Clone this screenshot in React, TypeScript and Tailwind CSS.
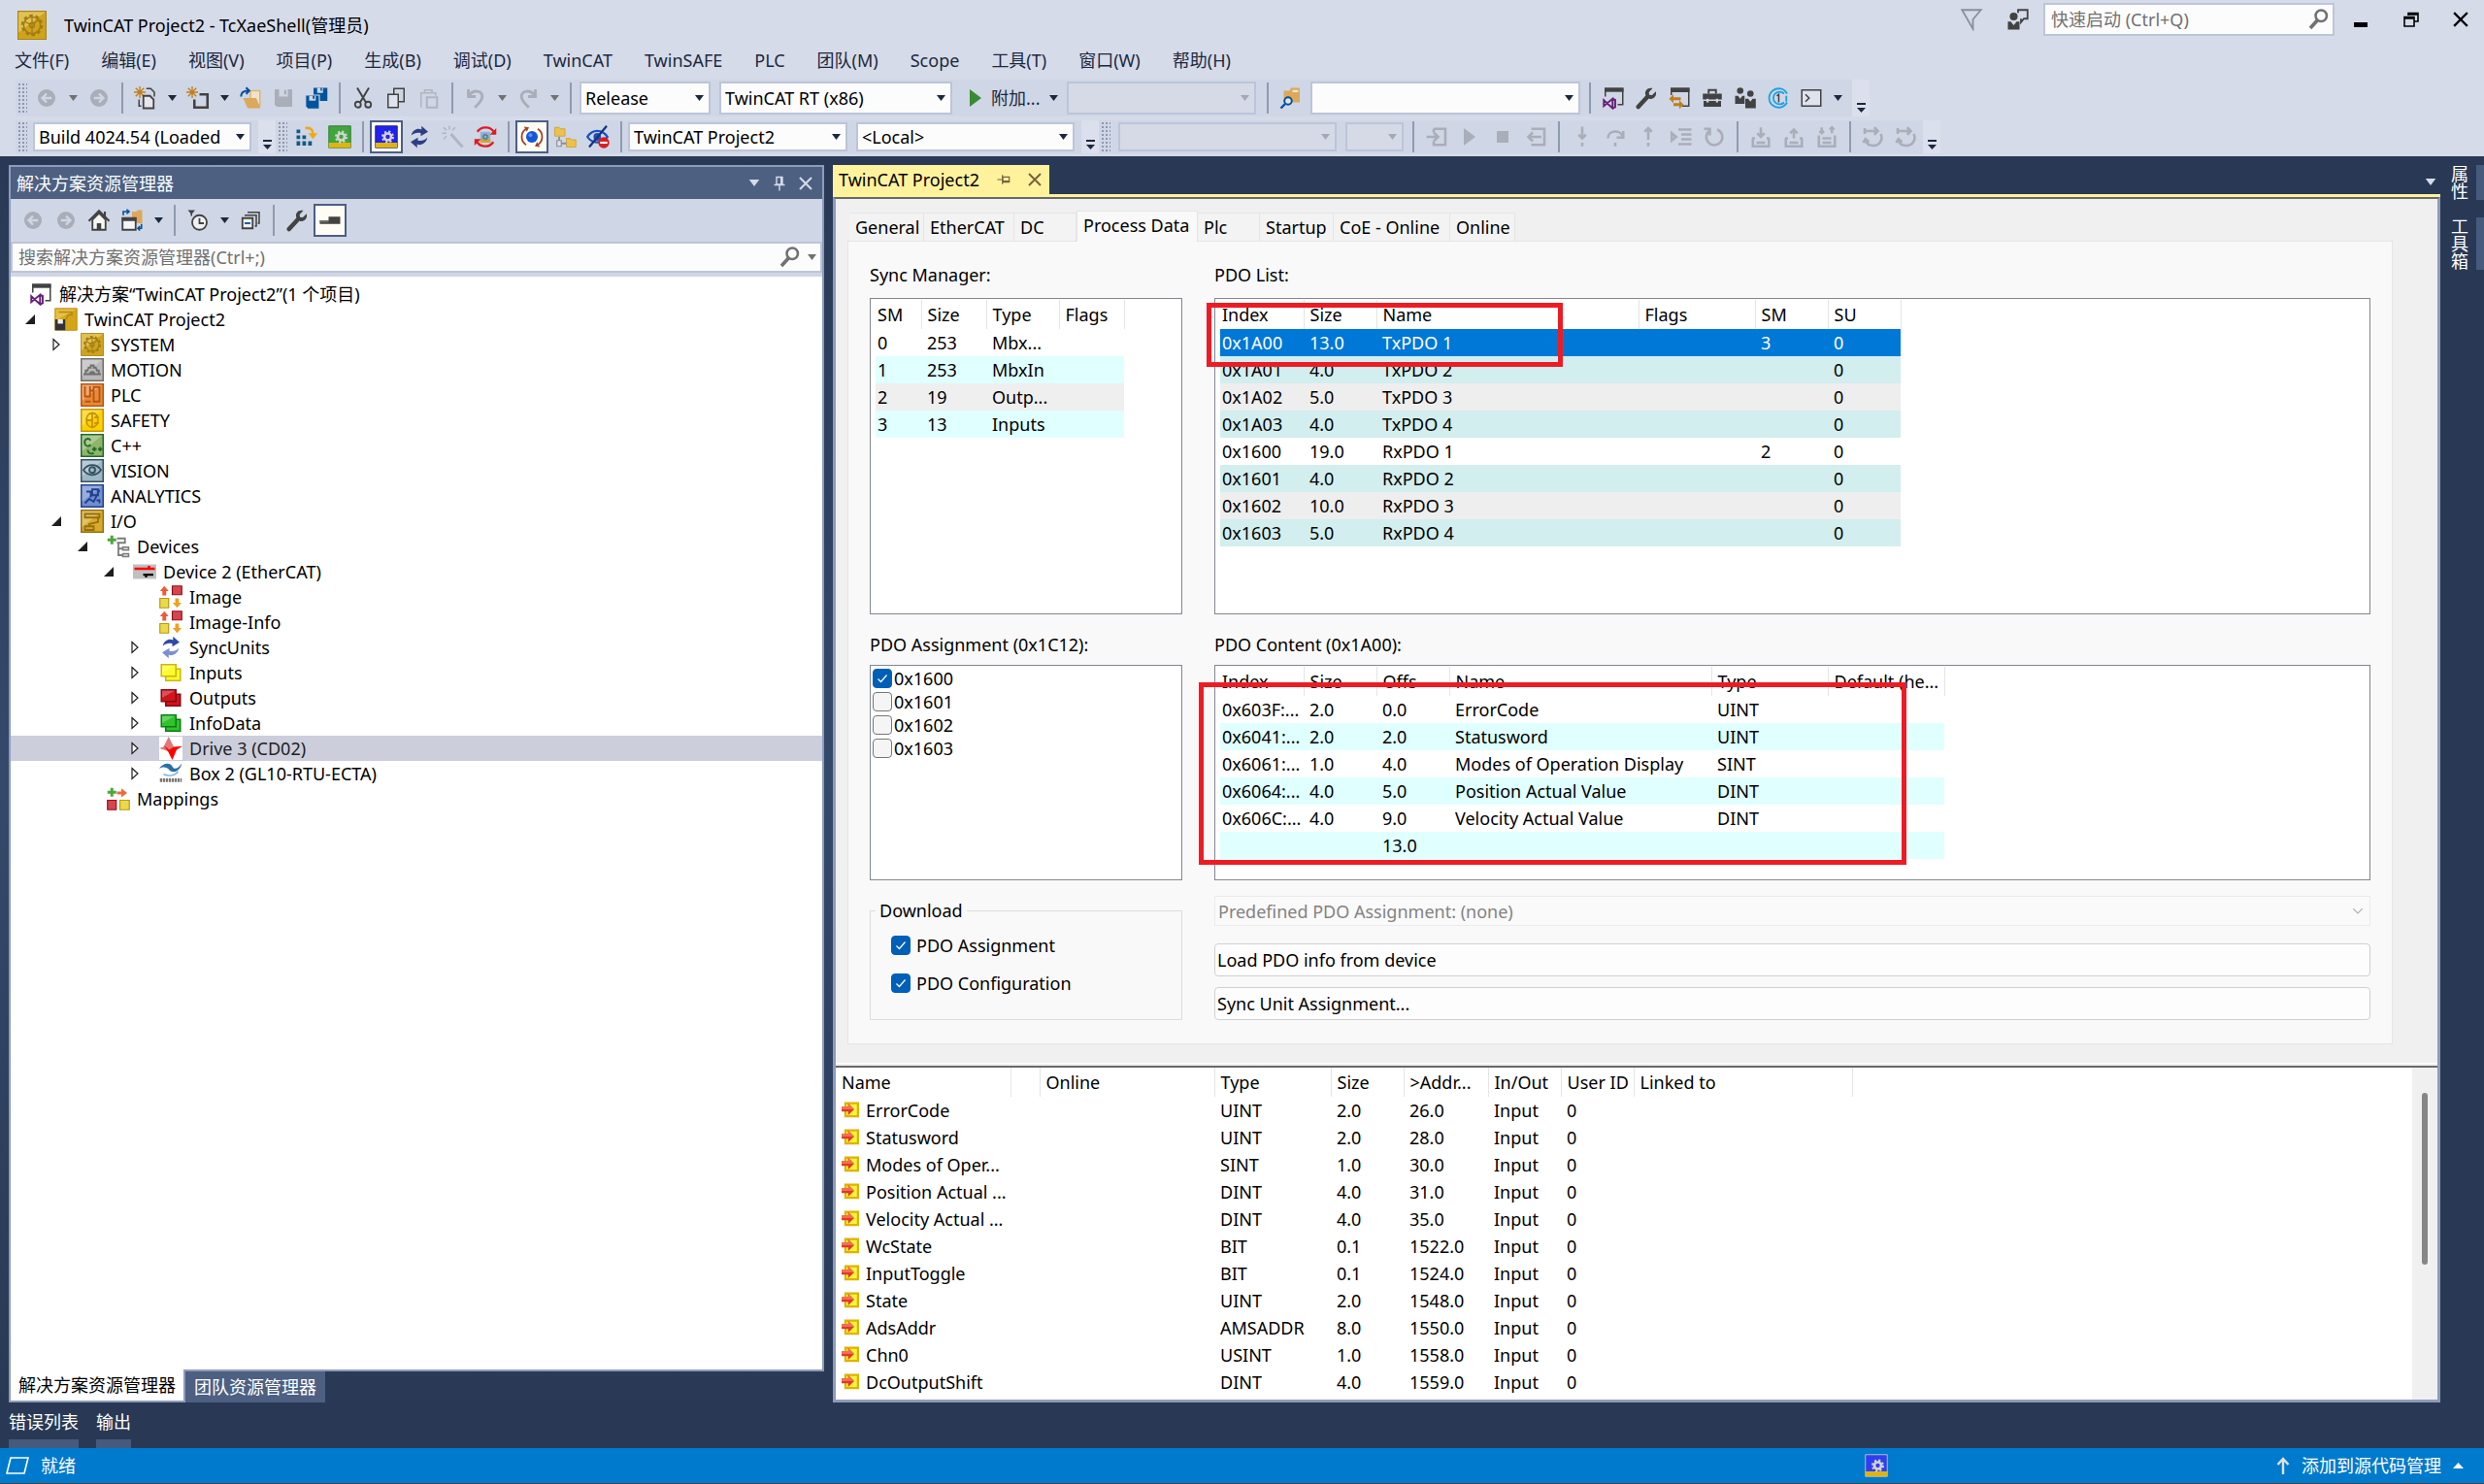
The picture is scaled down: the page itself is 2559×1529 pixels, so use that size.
import type { ReactNode } from 'react';
import clsx from 'clsx';

/* ---------- icon helpers ---------- */

type IconProps = { className?: string };

function Svg({ children, className = 'size-6', box = '0 0 16 16' }: { children: ReactNode; className?: string; box?: string }) {
  return (
    <svg viewBox={box} className={clsx('shrink-0', className)} fill="none" aria-hidden="true">
      {children}
    </svg>
  );
}

const Caret = ({ className = 'text-[#1b293e] w-[9px] h-[6px]' }: IconProps) => (
  <Svg className={className} box="0 0 9 6">
    <path d="M0 0h9L4.500 6z" fill="currentColor" />
  </Svg>
);

function Gear({ color, cx = 8, cy = 8, r = 4 }: { color: string; cx?: number; cy?: number; r?: number }) {
  return (
    <g stroke={color}>
      <circle cx={cx} cy={cy} r={r * 0.65} strokeWidth={r * 0.5} />
      <circle cx={cx} cy={cy} r={r} strokeWidth={r * 0.4} strokeDasharray={`${r * 0.393} ${r * 0.393}`} />
    </g>
  );
}

const CircleArrow = ({ flip }: { flip?: boolean }) => (
  <Svg>
    <circle cx="8" cy="8" r="6" fill="#a9aeb9" />
    <path d={flip ? 'M4.500 8h6M8 5l3 3-3 3' : 'M11.500 8h-6M8 5L5 8l3 3'} stroke="#cfd6e5" strokeWidth="1.600" />
  </Svg>
);

const Spark = () => (
  <path d="M4 0v8M0 4h8M1.200 1.200l5.600 5.600M6.800 1.200L1.200 6.800" stroke="#c27d1a" strokeWidth="0.900" />
);

const NewProject = () => (
  <Svg>
    <Spark />
    <path d="M8.500 1.500h3l2.500 2.500v3" stroke="#424242" />
    <path d="M6.500 6.500h4.500l2.500 2.500v6h-7z" fill="#e6e7ee" stroke="#424242" strokeWidth="1.200" />
    <path d="M3.500 9v4.500h1.500" stroke="#424242" />
  </Svg>
);

const NewItem = () => (
  <Svg>
    <Spark />
    <path d="M9 5.500h5.500v9h-9V9" stroke="#424242" strokeWidth="1.700" />
  </Svg>
);

const OpenFolder = () => (
  <Svg>
    <path d="M8 3h6.500v10H8z" fill="#f0e3c8" stroke="#dcb67a" />
    <path d="M3 8h9l3 7H6z" fill="#dca85a" />
    <path d="M1.500 7c0-3 2-4 5-4M5 .8L7.200 3 5 5.200" stroke="#00539c" strokeWidth="1.400" />
  </Svg>
);

const Save = ({ color = '#a9aeb9' }: { color?: string }) => (
  <Svg>
    <path d="M2 2h12v12H3.500L2 12.500z" fill={color} />
    <path d="M5 2h6v5H5z" fill="#cfd6e5" />
    <path d="M8.500 2.500h1.500v3H8.500z" fill={color} />
  </Svg>
);

const SaveAll = () => (
  <Svg>
    <path d="M6 1h9.500v9H6z" fill="#00539c" />
    <path d="M8.500 1h4v3.500h-4z" fill="#cfd6e5" />
    <path d="M.5 6H10v9.500H2L.5 14z" fill="#00539c" stroke="#cfd6e5" strokeWidth=".8" />
    <path d="M3 6.500h4.500v3.300H3z" fill="#cfd6e5" />
    <path d="M5.500 6.500h1.200v2H5.500zM10.800 1h1v2h-1z" fill="#00539c" />
  </Svg>
);

const Cut = () => (
  <Svg>
    <path d="M4 1l6 10M12 1L6 11" stroke="#424242" strokeWidth="1.300" />
    <circle cx="4.500" cy="12.500" r="2" stroke="#424242" strokeWidth="1.200" />
    <circle cx="11.500" cy="12.500" r="2" stroke="#424242" strokeWidth="1.200" />
  </Svg>
);

const Copy = () => (
  <Svg>
    <path d="M6.500 1.500h7v9h-7z" stroke="#424242" />
    <path d="M2.500 5.500h7v9h-7z" fill="#dfe3ee" stroke="#424242" />
  </Svg>
);

const Paste = () => (
  <Svg>
    <path d="M5 4V2.500h5V4M2.500 14.500V4.500h10v2" stroke="#b0b5c1" />
    <path d="M6.500 7.500h7v7h-7z" stroke="#b0b5c1" strokeWidth="1.400" />
  </Svg>
);

const Undo = ({ flip }: { flip?: boolean }) => (
  <Svg className={clsx('size-6', flip && '-scale-x-100')}>
    <path d="M3 2v5h5M3.500 6.500C6 2 12.500 2.500 12.500 7c0 3-2.500 5-5 7.500" stroke="#a9aeb9" strokeWidth="1.900" />
  </Svg>
);

const FindInFiles = () => (
  <Svg>
    <path d="M3 3h4l1-2h6v10H3z" fill="#dca85a" />
    <path d="M9 2.500h4v1.500H9z" fill="#f5e6c8" />
    <circle cx="6" cy="10" r="2.500" fill="#dfe6f2" stroke="#00539c" strokeWidth="1.300" />
    <path d="M4 12l-3 3" stroke="#00539c" strokeWidth="1.600" />
  </Svg>
);

const VsWindow = () => (
  <Svg>
    <path d="M2.500 7V1.500h12v11H11" stroke="#424242" />
    <path d="M2 1h13v2.800H2z" fill="#424242" />
    <path d="M1.500 9.500v4l6-5v6.500L1.500 9.500zM7.500 8.500l1.800.8v5l-1.800.7" stroke="#68217a" strokeWidth="1.300" />
  </Svg>
);

const Wrench = () => (
  <Svg>
    <path d="M2.500 14L8.500 7.500" stroke="#424242" strokeWidth="3" strokeLinecap="round" />
    <path d="M14.500 3.500L12 6 10 5.800 9.800 4 12.300 1.300C9 .5 6.500 3 7.500 6l2.500 2.500c3 .8 5.500-2 4.500-5z" fill="#424242" />
  </Svg>
);

const WindowArrows = () => (
  <Svg>
    <path d="M2.500 6V1.500h12v12H10" stroke="#424242" />
    <path d="M2 1h13v3H2z" fill="#424242" />
    <path d="M1 8.500l3-3v2h5v2H4v2zM11 12.500l-3 3v-2H4v-2h4v-2z" fill="#c27d1a" />
  </Svg>
);

const Toolbox = () => (
  <Svg>
    <path d="M5.500 5V2.500h5V5" stroke="#424242" strokeWidth="1.300" />
    <path d="M1.500 5h13v4h-13zM2 10h12v4H2z" fill="#424242" />
    <path d="M4 8.500h1.500v2.500H4zM10.500 8.500H12v2.500h-1.500z" fill="#cfd6e5" />
  </Svg>
);

const People = () => (
  <Svg>
    <circle cx="4.500" cy="3" r="2.200" fill="#424242" />
    <circle cx="11.500" cy="5" r="2.200" fill="#424242" />
    <path d="M1 6.500h2l1.500 2L6 6.500h1.500V12H1zM8 8.500h2l1.500 2 1.500-2h2.200V15H8z" fill="#424242" />
  </Svg>
);

const CloudOne = () => (
  <Svg>
    <path d="M14 5A6.500 6.500 0 1 0 14 11" stroke="#1ba1e2" strokeWidth="1.200" />
    <path d="M12 5a4.300 4.300 0 1 0 0 6M13.500 6.500v4" stroke="#1ba1e2" strokeWidth="1.200" />
    <path d="M7 6.500L8.300 5.500V11" stroke="#424242" />
  </Svg>
);

const CommandWindow = () => (
  <Svg>
    <path d="M1.500 2.500h13v11h-13z" fill="#dfe3ee" stroke="#424242" />
    <path d="M4 5.500L6.500 8 4 10.500" stroke="#424242" />
  </Svg>
);

const Bricks = () => (
  <Svg>
    <path d="M1 3h2.500v2.500H1zM1 7h2.500v2.500H1zM5 7h2.500v2.500H5zM1 11h2.500v3H1zM5 11h2.500v3H5zM9 11h2.500v3H9z" fill="#0e5c86" />
    <path d="M7 2c3.500-.5 5.300 1 5.300 4" stroke="#f0a818" strokeWidth="1.700" />
    <path d="M9 5.500h6.500L12.300 9.500z" fill="#f0a818" />
  </Svg>
);

const ModeBox = ({ color, edge }: { color: string; edge: string }) => (
  <Svg>
    <path d="M.5.500h15v15H.5z" fill={color} stroke={edge} strokeWidth=".6" />
    <path d="M.5 12h15v3.500H.5z" fill="#e0b410" />
    <Gear color="#d3d3d3" cx={9} cy={8} r={3.6} />
  </Svg>
);

const SyncArrows = ({ top = '#2c3f85', bottom = '#2c3f85' }: { top?: string; bottom?: string }) => (
  <Svg>
    <path d="M2.500 7C3 3.500 7 1.500 9.500 3V.5L14 4.500 9 7.500V5.500C6.500 4.800 4.500 5.500 2.500 7z" fill={top} />
    <path d="M13.500 8.500C13 12 9 14.500 6.500 13v2.500L2 11.500 7 8.500v2c2.500.7 4.500-.2 6.500-2z" fill={bottom} />
  </Svg>
);

const Wand = () => (
  <Svg>
    <path d="M7 6l8 9" stroke="#b0b5c1" strokeWidth="2" />
    <path d="M6 .5V3M1 5.500h3M2 1.500l2 2M10 1.500l-2 2M2 9.500l2-2" stroke="#b0b5c1" />
  </Svg>
);

const Reload = () => (
  <Svg>
    <path d="M4.500 4.500h7v7h-7z" fill="#8fb6d8" />
    <path d="M4.500 9.500h7v2.500h-7z" fill="#d9a520" />
    <Gear color="#5c7f9c" r={2} />
    <path d="M14.500 6A6.800 6.800 0 0 0 2.500 4.500M1.500 10a6.800 6.800 0 0 0 12 1.500" stroke="#e01b24" strokeWidth="1.500" />
    <path d="M15.500 2v4.500H11zM.5 14V9.500H5z" fill="#e01b24" />
  </Svg>
);

const BlueBall = () => (
  <Svg>
    <circle cx="8" cy="8" r="4" fill="#1158d8" />
    <circle cx="7" cy="6.800" r="1.300" fill="#5b94f0" />
    <path d="M4 2.500C0 5 0 11 4 13.500M12 2.500c4 2.500 4 8.500 0 11" stroke="#a0442c" strokeWidth="1.200" />
    <path d="M2.500 1L6 1.500 4.500 4.500zM13.500 15l-3.500-.5 1.500-3z" fill="#a0442c" />
  </Svg>
);

const FolderTree = () => (
  <Svg>
    <path d="M1 1.500h3l1 1h3v5H1zM9 9h2.500l.8 1H15.500v5H9z" fill="#edc14a" stroke="#c89b2a" strokeWidth=".5" />
    <path d="M4 8v4.500h5M2.500 12.500h3" stroke="#8b8f99" strokeWidth="1.200" />
    <path d="M2.500 10.500h3v4h-3z" fill="#dfe3ee" stroke="#8b8f99" strokeWidth=".8" />
  </Svg>
);

const NoEye = () => (
  <Svg>
    <path d="M.8 8C4 2.500 11 2.500 14.500 8 11 13 4 13 .8 8z" stroke="#1c4fc0" strokeWidth="1.500" />
    <circle cx="7.500" cy="8" r="2.600" fill="#1c4fc0" />
    <path d="M14 .5L2 15" stroke="#16337c" strokeWidth="1.500" />
    <circle cx="12" cy="12" r="3.800" fill="#d81e20" />
    <path d="M9.500 12h5" stroke="#fff" strokeWidth="1.400" />
  </Svg>
);

const grayDraw: Record<string, string> = {
  login: 'M6 2.500h8v11H6V11M6 5V2.500M1 8h8M6 5l3 3-3 3',
  logout: 'M5 2.500h9v11H5M12 8H3M6 5L3 8l3 3',
  stepIn: 'M8 1v8M5.500 6.500L8 9l2.500-2.500M8 12v2.500',
  stepOver: 'M3 9c0-6 9-6 10-1M13.500 4v4.500H9M8 12v2.500',
  stepOut: 'M8 10V2M5.500 4.500L8 2l2.500 2.500M8 12v2.500',
  nextLine: 'M6 3h9M8 6.300h7M8 9.600h7M6 13h9M1.500 5.500L4.500 8l-3 2.500z',
  restart: 'M10 3a5.500 5.500 0 1 1-4.500.3M5 7V2.500H1',
  download: 'M2 9h2M12 9h2M2.500 9v5.500h11V9M5 12h6M8 1.500V8M5.500 5.500L8 8l2.500-2.500',
  upload: 'M2 9h2M12 9h2M2.500 9v5.500h11V9M5 12h6M8 9V3M5.500 5.500L8 3l2.500 2.500',
  exchange: 'M2.500 7v7.500h11V7M5 9h6M5 12h6M4.500 1.500v4M3 4l1.500 1.500L6 4M11.500 5.500v-4M10 3l1.500-1.500L13 3',
  cycle: 'M2 4h9M2 2v4M8.500 1.500L11 4 8.500 6.500M13 6c2 4-1 8-5 8-3 0-5-1.500-5.500-4M1 12l1.500-2.500L5 11.500',
};

const Gray = ({ name }: { name: string }) => (
  <Svg>
    <path d={grayDraw[name]} stroke="#a9aeb9" strokeWidth="1.700" />
  </Svg>
);

const Home = () => (
  <Svg>
    <path d="M1 8.500L8 1.500l7 7M12 2v4" stroke="#424242" strokeWidth="1.400" />
    <path d="M3.500 7.500v7h9v-7L8 3z" fill="#f6f6f6" stroke="#424242" strokeWidth="1.200" />
    <path d="M6.500 10h3v4.500h-3z" fill="#424242" />
  </Svg>
);

const FolderView = () => (
  <Svg>
    <path d="M8 2h3l1-1h3v9H8z" fill="#dca85a" />
    <path d="M1.500 6.500h9v8h-9z" fill="#f6f6f6" stroke="#424242" strokeWidth="1.200" />
    <path d="M1 6h10v2.500H1z" fill="#424242" />
    <path d="M2 4.500V2h3.500M4.300.5L6 2 4.300 3.500M14.500 10.500v3h-2.500M13.500 12L12 13.500l1.500 1.500" stroke="#00539c" strokeWidth="1.100" />
  </Svg>
);

const ClockFilter = () => (
  <Svg>
    <path d="M1 1h5L3.500 4z" fill="#424242" />
    <path d="M3.500 3v2" stroke="#424242" />
    <circle cx="9" cy="9.500" r="5" fill="#f0f1f5" stroke="#424242" strokeWidth="1.200" />
    <path d="M9 6.500v3.500h3" stroke="#424242" strokeWidth="1.200" />
  </Svg>
);

const CollapseAll = () => (
  <Svg>
    <path d="M6.500 3V2.500h7.500v7.500h-1M4.500 5V4.500H12V12h-1" stroke="#424242" />
    <path d="M2.500 6.500h7v7h-7z" fill="#f0f1f5" stroke="#424242" strokeWidth="1.200" />
    <path d="M4 10h4" stroke="#00539c" strokeWidth="1.200" />
  </Svg>
);

const PreviewTab = () => (
  <Svg>
    <path d="M1 8h6V5.500h8v5H1z" fill="#424242" />
    <path d="M1 8h6v1.500H1z" fill="#6b6b6b" />
  </Svg>
);

const Magnifier = () => (
  <Svg>
    <circle cx="9.500" cy="5.500" r="3.800" stroke="#717171" strokeWidth="1.700" />
    <path d="M7 8.500L2 14" stroke="#717171" strokeWidth="2.400" />
  </Svg>
);

const Cross = ({ className = 'size-4' }: IconProps) => (
  <Svg className={className} box="0 0 14 14">
    <path d="M1 1l12 12M13 1L1 13" stroke="currentColor" strokeWidth="2" />
  </Svg>
);

const Pin = ({ className = 'size-4' }: IconProps) => (
  <Svg className={className}>
    <path d="M5 1.500h6V9H5zM2.500 9.500h11M8 10v5.500M9.700 2v7" stroke="currentColor" strokeWidth="1.400" />
  </Svg>
);

const TwinCatLogo = ({ className = 'size-[30px]' }: IconProps) => (
  <Svg className={className}>
    <path d="M.3.300h15.400v15.400H.3z" fill="#cfa41c" stroke="#a8841a" strokeWidth=".6" />
    <path d="M.6.600h14.800L.6 12z" fill="#ecd37a" opacity=".6" />
    <circle cx="8" cy="8" r="4.600" stroke="#a17c14" strokeWidth=".8" />
    <circle cx="8" cy="8" r="5.400" stroke="#a17c14" strokeWidth="1.200" strokeDasharray="1.900 1.500" />
    <circle cx="8" cy="8" r="1.300" stroke="#a17c14" strokeWidth=".8" />
    <path d="M8 3v10M9 7l3-2.500M4 6l3 1.500" stroke="#a17c14" strokeWidth=".7" />
  </Svg>
);

const Tile = ({ from, edge, children }: { from: string; edge: string; children: ReactNode }) => (
  <Svg>
    <path d="M.5.500h15v15H.5z" fill={from} stroke={edge} />
    <path d="M1 1h14L1 12z" fill="#fff" opacity=".28" />
    <g stroke={edge} strokeWidth="1.200">{children}</g>
  </Svg>
);

const Layers = ({ fill, edge }: { fill: string; edge: string }) => (
  <Svg>
    <path d="M4.500 5.500h10v8h-10z" fill={fill} stroke={edge} />
    <path d="M1.500 2.500h10v8h-10z" fill={fill} stroke={edge} />
    <path d="M2 3h9L2 8z" fill="#fff" opacity=".25" />
  </Svg>
);

const ImageIcon = () => (
  <Svg>
    <path d="M3.500.500L6.500 4H4.800v3H2.200V4H.5z" fill="#ee5a38" />
    <path d="M9 .5h6.500v6H9z" fill="#d8444e" stroke="#8f1220" strokeWidth=".8" />
    <path d="M.5 9h6v6.500h-6z" fill="#ecd94a" stroke="#b89a18" strokeWidth=".8" />
    <path d="M12.300 15.500L9.300 12H11V9h2.500v3h1.800z" fill="#f0a020" />
  </Svg>
);

const treeIcons: Record<string, ReactNode> = {
  solution: <VsWindow />,
  project: (
    <Svg>
      <path d="M.5.500h15v15H.5z" fill="#d6a516" stroke="#b88c10" strokeWidth=".6" />
      <path d="M1 1h14L1 9z" fill="#f0d060" opacity=".6" />
      <path d="M3 3h9v2H9.500L8 8" stroke="#b08a18" />
      <path d="M.5 8h7v7.500h-7z" fill="#333" />
      <path d="M2.300 8h3.600v3H2.300z" fill="#eee" />
    </Svg>
  ),
  system: <TwinCatLogo className="size-6" />,
  motion: (
    <Tile from="#b9b9b9" edge="#6f6f6f">
      <path d="M2 11h12M3.500 11V8.500h1.300L5.500 6.500H7V5h2v1.500h1.500l.7 2h1.300V11M6.500 11a1.500 1.500 0 0 1 3 0" />
    </Tile>
  ),
  plc: (
    <Tile from="#e88a3a" edge="#b9540a">
      <path d="M3 2v7h3.500V2M9 2.500h4v10H9zM3 12.500h4M6.500 5H9" />
    </Tile>
  ),
  safety: (
    <Tile from="#fdd000" edge="#c79400">
      <path d="M8 3C3 3 2.500 12.500 8 13M8 3v10M8 3c5 0 5.500 9 0 10M4 8h4M9.500 6h3M9.500 10h3" />
    </Tile>
  ),
  cpp: (
    <Tile from="#8fb56a" edge="#1f6b2a">
      <path d="M7 4.500C5 2 2 4 3 7c.5 1.500 2.500 2 4 .5M5 11c0 3 3 3 4 2M8 10.500h3M9.500 9v3M12 10.500h3M13.500 9v3" />
    </Tile>
  ),
  vision: (
    <Tile from="#9db7c6" edge="#33505f">
      <path d="M2 7.500C5 3 11 3 14 7.500 11 12 5 12 2 7.500z" />
      <circle cx="8" cy="7.500" r="2" />
    </Tile>
  ),
  analytics: (
    <Tile from="#6f8fd0" edge="#223f8f">
      <path d="M3 13l3-3 3 2 4-8M4 5h3v4M8 3.500h4v4H8zM11 11h2v2" />
    </Tile>
  ),
  io: (
    <Tile from="#d9a92c" edge="#94700e">
      <path d="M3 3h10v2.500H3zM3 11.500h6V14H3zM12 6v2.500L6 10v1.500" />
    </Tile>
  ),
  devices: (
    <Svg>
      <path d="M7 2.500h5.500v3H7M8 5.500v8.500h3M8 9.500h3" stroke="#7c7c7c" strokeWidth="1.200" />
      <path d="M11 8.500h4v2h-4zM11 13h4v2h-4z" fill="#ddd" stroke="#7c7c7c" />
      <path d="M3.500.500v6M.5 3.500h6" stroke="#4aa83c" strokeWidth="2" />
    </Svg>
  ),
  device: (
    <Svg>
      <path d="M0 3h16v10H0z" fill="#c0c0c0" />
      <path d="M1 6h14M11 4v2" stroke="#f00" strokeWidth="1.800" />
      <path d="M7 10h7M9 10.500v1.500" stroke="#000" strokeWidth="1.500" />
    </Svg>
  ),
  image: <ImageIcon />,
  sync: <SyncArrows top="#2f4aa8" bottom="#7b8fd8" />,
  inputs: <Layers fill="#fbfb30" edge="#d0b400" />,
  outputs: <Layers fill="#d0141e" edge="#8a0810" />,
  info: <Layers fill="#2fc42c" edge="#0c7d10" />,
  drive: (
    <Svg>
      <path d="M0 0h16v16H0z" fill="#fff" />
      <path d="M0 8l3-1 3.500-7L10 7l2 1-3 3z" fill="#e07878" />
      <path d="M3 6l4 3 3-2 6-.5L12 9l-3 7-3-6z" fill="#f00" />
    </Svg>
  ),
  box: (
    <Svg>
      <path d="M0 4.500C3 0 8 .5 9 3c1 2.500 4 2 6.500-2-1 6-7 7.500-9 4C5 3.500 3 3 0 4.500z" fill="#2a6fa5" />
      <path d="M3 8.500c4 1.500 8 1 10-2" stroke="#7bb0d6" />
      <path d="M.5 12.500h15" stroke="#777" strokeWidth="2.500" strokeDasharray="1.500 .5" />
    </Svg>
  ),
  mappings: (
    <Svg>
      <path d="M3.500.500v6M.5 3.500h6" stroke="#4aa83c" strokeWidth="2" />
      <path d="M7 3h3V.8L14 4l-4 3V5H7z" fill="#ee6a38" />
      <path d="M.5 9h6v6.500h-6z" fill="#d8444e" stroke="#8f1220" strokeWidth=".8" />
      <path d="M9 9h6.500v6.500H9z" fill="#ecd94a" stroke="#b89a18" strokeWidth=".8" />
    </Svg>
  ),
};

const VarIcon = () => (
  <Svg className="size-[18px]">
    <path d="M3.500 1.500h11.500v12H3.500z" fill="#fbf33a" stroke="#dcb400" strokeWidth="2" />
    <path d="M0 4.500h6V1.500L11.500 7 6 12.500V9H0z" fill="#e2382a" />
    <path d="M0 4.500h6V1.500L11.500 7H0z" fill="#f07050" />
  </Svg>
);

/* ---------- toolbar parts ---------- */

const Grip = () => (
  <span className="mx-[3px] h-[30px] w-[9px] shrink-0 bg-[radial-gradient(circle_at_1px_1px,#8d97ad_1px,transparent_1.5px)] bg-[length:4px_4px]" />
);
const Sep = () => <span className="mx-1.5 h-8 w-0.5 shrink-0 bg-[#8f9bb0]" />;

function Tool({ label, on, children }: { label: string; on?: boolean; children: ReactNode }) {
  return (
    <button
      type="button"
      aria-label={label}
      className={clsx('flex h-[34px] w-[34px] shrink-0 items-center justify-center', on && 'border-2 border-[#4b5f85] bg-[#fffcf4]')}
    >
      {children}
    </button>
  );
}

const Drop = ({ off }: { off?: boolean }) => (
  <button type="button" aria-label="更多" className="flex h-8 w-5 shrink-0 items-center justify-center">
    <Caret className={off ? 'h-1.5 w-[9px] text-[#717171]' : 'h-1.5 w-[9px] text-[#1b293e]'} />
  </button>
);

function Combo({ label, value, width, height = 'h-[34px]', off }: { label: string; value?: string; width: string; height?: string; off?: boolean }) {
  return (
    <label className={clsx('relative flex shrink-0 items-center', width, height)}>
      <select
        aria-label={label}
        disabled={off}
        className={clsx(
          'h-full w-full appearance-none border-2 px-1 text-black',
          off ? 'border-[#bcc5d9] bg-[#d5dae6]' : 'border-[#bcc5d9] bg-[#fcfcfc]',
        )}
      >
        <option>{value}</option>
      </select>
      <span className="pointer-events-none absolute right-[7px]">
        <Caret className={off ? 'h-1.5 w-[9px] text-[#a2a9b8]' : 'h-1.5 w-[9px] text-[#1b293e]'} />
      </span>
    </label>
  );
}

const Overflow = () => (
  <button type="button" aria-label="工具栏选项" className="flex w-[18px] shrink-0 items-end justify-center self-stretch bg-[#dce0ec] pb-1">
    <Svg className="h-2.5 w-[9px]" box="0 0 9 10">
      <path d="M0 1h9" stroke="#1b293e" strokeWidth="2" />
      <path d="M0 5h9L4.500 10z" fill="#1b293e" />
    </Svg>
  </button>
);

const Band = ({ children, className }: { children: ReactNode; className?: string }) => (
  <div className={clsx('flex items-center bg-[#cfd6e5]', className)}>{children}</div>
);

const menus = ['文件(F)', '编辑(E)', '视图(V)', '项目(P)', '生成(B)', '调试(D)', 'TwinCAT', 'TwinSAFE', 'PLC', '团队(M)', 'Scope', '工具(T)', '窗口(W)', '帮助(H)'];

function Header() {
  return (
    <header className="bg-[#d6dbe9] pb-[3px] text-[#1b293e]">
      <div className="flex h-[45px]">
        <div className="flex flex-1 items-center gap-[18px] pl-[18px] pt-1.5">
          <TwinCatLogo />
          <h1 className="text-black">TwinCAT Project2 - TcXaeShell(管理员)</h1>
        </div>
        <div className="flex items-start pr-4 pt-[3px] text-black">
          <div className="flex h-[34px] items-center gap-6 pr-3.5">
            <Svg>
              <path d="M1.500 1.500h13L9 8v6.500L1.500 1.500z" stroke="#8a8f9b" strokeWidth="1.200" />
            </Svg>
            <Svg>
              <circle cx="5" cy="6" r="2.700" fill="#424242" />
              <path d="M1 9.500h2L5 12l2-2.500h2V15H1z" fill="#424242" />
              <path d="M8 3.500v-2h6.500v6H12L10 10V7.500" stroke="#424242" strokeWidth="1.200" />
            </Svg>
          </div>
          <div className="flex h-[34px] w-[300px] items-center border-2 border-[#bcc5d9] bg-[#fcfcfc] pr-0.5">
            <input aria-label="快速启动" placeholder="快速启动 (Ctrl+Q)" className="min-w-0 flex-1 px-1.5 placeholder:text-[#717171]" />
            <Magnifier />
          </div>
          <div className="flex h-[34px] items-center gap-[35px] pl-[18px]">
            <button type="button" aria-label="最小化" className="flex h-4 w-[18px] items-end justify-center">
              <span className="h-[5px] w-3.5 bg-black" />
            </button>
            <button type="button" aria-label="还原">
              <Svg className="size-4">
                <path d="M5 4V1.500h10V10h-3.500M1 5.500h10V15H1z" stroke="#000" strokeWidth="1.600" />
                <path d="M1 6.500h10M5 2.500h10" stroke="#000" strokeWidth="2.400" />
              </Svg>
            </button>
            <button type="button" aria-label="关闭">
              <Cross />
            </button>
          </div>
        </div>
      </div>
      <nav className="-ml-px flex h-[37px] items-center gap-px pb-[3px]">
        {menus.map((m) => (
          <button key={m} type="button" className="px-4">
            {m}
          </button>
        ))}
      </nav>
      <div className="flex pl-4">
        <Band className="h-[38px]">
          <Grip />
          <Tool label="后退"><CircleArrow /></Tool>
          <Drop off />
          <Tool label="前进"><CircleArrow flip /></Tool>
          <Sep />
          <Tool label="新建项目"><NewProject /></Tool>
          <Drop />
          <Tool label="新建项"><NewItem /></Tool>
          <Drop />
          <Tool label="打开"><OpenFolder /></Tool>
          <Tool label="保存"><Save /></Tool>
          <Tool label="全部保存"><SaveAll /></Tool>
          <Sep />
          <Tool label="剪切"><Cut /></Tool>
          <Tool label="复制"><Copy /></Tool>
          <Tool label="粘贴"><Paste /></Tool>
          <Sep />
          <Tool label="撤消"><Undo /></Tool>
          <Drop off />
          <Tool label="重做"><Undo flip /></Tool>
          <Drop off />
          <Sep />
          <span className="w-0.5" />
          <Combo label="解决方案配置" value="Release" width="w-[135px]" />
          <span className="w-[9px]" />
          <Combo label="解决方案平台" value="TwinCAT RT (x86)" width="w-[240px]" />
          <button type="button" className="flex h-8 w-[118px] items-center gap-2.5 pl-[18px]">
            <Svg className="h-[18px] w-3" box="0 0 12 18">
              <path d="M0 0l12 9L0 18z" fill="#388a34" />
            </Svg>
            附加...
            <Caret />
          </button>
          <Combo label="调试目标" width="w-[195px]" off />
          <span className="w-[5px]" />
          <Sep />
          <Tool label="在文件中查找"><FindInFiles /></Tool>
          <span className="w-[3px]" />
          <Combo label="查找" width="w-[278px]" />
          <span className="w-[3px]" />
          <Sep />
          <Tool label="解决方案资源管理器"><VsWindow /></Tool>
          <Tool label="属性"><Wrench /></Tool>
          <Tool label="对象浏览器"><WindowArrows /></Tool>
          <Tool label="工具箱"><Toolbox /></Tool>
          <Tool label="团队"><People /></Tool>
          <Tool label="起始页"><CloudOne /></Tool>
          <Tool label="命令窗口"><CommandWindow /></Tool>
          <Drop />
          <span className="w-[5px]" />
        </Band>
        <Overflow />
      </div>
      <div className="flex pl-4 pt-1">
        <Band className="h-[34px]">
          <Grip />
          <span className="w-[3px]" />
          <Combo label="TwinCAT 版本" value="Build 4024.54 (Loaded" width="w-[225px]" height="h-[30px]" />
          <span className="w-[7px]" />
        </Band>
        <Overflow />
        <Band>
          <Grip />
          <Tool label="激活配置"><Bricks /></Tool>
          <Tool label="运行模式"><ModeBox color="#3fa53c" edge="#2f7a2c" /></Tool>
          <Sep />
          <Tool label="配置模式" on><ModeBox color="#2222ee" edge="#1a1a9a" /></Tool>
          <Tool label="重新加载设备"><SyncArrows /></Tool>
          <Tool label="扫描"><Wand /></Tool>
          <Tool label="自由运行"><Reload /></Tool>
          <Sep />
          <Tool label="显示在线数据" on><BlueBall /></Tool>
          <Tool label="显示子项"><FolderTree /></Tool>
          <Tool label="隐藏禁用项"><NoEye /></Tool>
          <Sep />
          <Combo label="活动项目" value="TwinCAT Project2" width="w-[226px]" height="h-[30px]" />
          <span className="w-[9px]" />
          <Combo label="目标系统" value="<Local>" width="w-[225px]" height="h-[30px]" />
          <span className="w-[7px]" />
        </Band>
        <Overflow />
        <Band>
          <Grip />
          <span className="w-[5px]" />
          <Combo label="PLC 项目" width="w-[225px]" height="h-[30px]" off />
          <span className="w-[9px]" />
          <Combo label="端口" width="w-[60px]" height="h-[30px]" off />
          <span className="w-[3px]" />
          <Sep />
          <Tool label="登录"><Gray name="login" /></Tool>
          <Tool label="启动">
            <Svg><path d="M4 2l8 6-8 6z" fill="#a9aeb9" /></Svg>
          </Tool>
          <Tool label="停止">
            <Svg><path d="M4 4h8v8H4z" fill="#a9aeb9" /></Svg>
          </Tool>
          <Tool label="注销"><Gray name="logout" /></Tool>
          <Sep />
          <Tool label="单步进入"><Gray name="stepIn" /></Tool>
          <Tool label="单步跳过"><Gray name="stepOver" /></Tool>
          <Tool label="单步跳出"><Gray name="stepOut" /></Tool>
          <Tool label="显示下一语句"><Gray name="nextLine" /></Tool>
          <Tool label="重置"><Gray name="restart" /></Tool>
          <Sep />
          <Tool label="下载"><Gray name="download" /></Tool>
          <Tool label="上传"><Gray name="upload" /></Tool>
          <Tool label="交换"><Gray name="exchange" /></Tool>
          <Sep />
          <Tool label="循环写"><Gray name="cycle" /></Tool>
          <Tool label="循环强制"><Gray name="cycle" /></Tool>
        </Band>
        <Overflow />
      </div>
    </header>
  );
}

/* ---------- solution explorer ---------- */

type Node = { label: string; icon: string; level: number; open?: boolean; closed?: boolean; selected?: boolean };

const tree: Node[] = [
  { label: '解决方案“TwinCAT Project2”(1 个项目)', icon: 'solution', level: 0 },
  { label: 'TwinCAT Project2', icon: 'project', level: 1, open: true },
  { label: 'SYSTEM', icon: 'system', level: 2, closed: true },
  { label: 'MOTION', icon: 'motion', level: 2 },
  { label: 'PLC', icon: 'plc', level: 2 },
  { label: 'SAFETY', icon: 'safety', level: 2 },
  { label: 'C++', icon: 'cpp', level: 2 },
  { label: 'VISION', icon: 'vision', level: 2 },
  { label: 'ANALYTICS', icon: 'analytics', level: 2 },
  { label: 'I/O', icon: 'io', level: 2, open: true },
  { label: 'Devices', icon: 'devices', level: 3, open: true },
  { label: 'Device 2 (EtherCAT)', icon: 'device', level: 4, open: true },
  { label: 'Image', icon: 'image', level: 5 },
  { label: 'Image-Info', icon: 'image', level: 5 },
  { label: 'SyncUnits', icon: 'sync', level: 5, closed: true },
  { label: 'Inputs', icon: 'inputs', level: 5, closed: true },
  { label: 'Outputs', icon: 'outputs', level: 5, closed: true },
  { label: 'InfoData', icon: 'info', level: 5, closed: true },
  { label: 'Drive 3 (CD02)', icon: 'drive', level: 5, closed: true, selected: true },
  { label: 'Box 2 (GL10-RTU-ECTA)', icon: 'box', level: 5, closed: true },
  { label: 'Mappings', icon: 'mappings', level: 3 },
];

const indents = ['pl-1', 'pl-[30px]', 'pl-[57px]', 'pl-[84px]', 'pl-[111px]', 'pl-[138px]'];

function TreeRow({ node }: { node: Node }) {
  const toggle = node.open || node.closed;
  return (
    <li className={clsx('flex h-[26px] items-center', indents[node.level], node.selected && 'bg-[#cccedb] text-[#222]')}>
      {toggle ? (
        <button type="button" aria-label={node.label} className="-ml-[18px] mr-[18px] flex h-5 w-[15px] shrink-0 items-center justify-center">
          {node.open ? (
            <Svg className="size-2.5" box="0 0 10 10">
              <path d="M10 0v10H0z" fill="#1e1e1e" />
            </Svg>
          ) : (
            <Svg className="h-3.5 w-2" box="0 0 8 14">
              <path d="M1 1.500L7 7l-6 5.500z" fill="#fff" stroke="#1e1e1e" strokeWidth="1.200" />
            </Svg>
          )}
        </button>
      ) : (
        <span className="w-[15px] shrink-0" />
      )}
      {treeIcons[node.icon]}
      <span className="pl-[7px] whitespace-nowrap">{node.label}</span>
    </li>
  );
}

function SolutionExplorer() {
  return (
    <aside className="flex w-[858px] shrink-0 flex-col bg-[linear-gradient(to_bottom,#293955,#35496a,#293955)] pl-[9px] pr-[9px] pt-[9px]">
      <section className="flex flex-1 flex-col border-2 border-[#8e9bbc] bg-white">
        <div className="flex h-[33px] items-center gap-3 bg-[#4d6082] pl-1.5 pr-2.5 text-white">
          <h2 className="flex-1">解决方案资源管理器</h2>
          <Caret className="h-[7px] w-3 text-[#d6dbe9]" />
          <Pin className="size-4 text-[#d6dbe9]" />
          <Cross className="size-3.5 text-[#d6dbe9]" />
        </div>
        <div className="flex h-11 items-center bg-[#cfd6e5] pl-1.5">
          <Tool label="后退"><CircleArrow /></Tool>
          <Tool label="前进"><CircleArrow flip /></Tool>
          <Tool label="主页"><Home /></Tool>
          <Tool label="切换视图"><FolderView /></Tool>
          <Drop />
          <Sep />
          <Tool label="挂起的更改筛选器"><ClockFilter /></Tool>
          <Drop />
          <Tool label="全部折叠"><CollapseAll /></Tool>
          <Sep />
          <Tool label="属性"><Wrench /></Tool>
          <Tool label="预览选定项" on><PreviewTab /></Tool>
        </div>
        <div className="bg-[#cfd6e5] pb-1">
          <div className="flex h-8 items-center gap-1.5 border-2 border-[#bcc5d9] bg-[#fcfcfc] pr-1">
            <input
              aria-label="搜索解决方案资源管理器"
              placeholder="搜索解决方案资源管理器(Ctrl+;)"
              className="min-w-0 flex-1 px-1.5 placeholder:text-[#717171]"
            />
            <Magnifier />
            <Caret className="h-1.5 w-[9px] text-[#717171]" />
          </div>
        </div>
        <ul className="pt-[5px] text-black">
          {tree.map((n, i) => (
            <TreeRow key={i} node={n} />
          ))}
        </ul>
      </section>
      <div className="flex h-8">
        <button type="button" className="-mt-0.5 border-2 border-t-0 border-[#8e9bbc] bg-white px-2 text-black">
          解决方案资源管理器
        </button>
        <button type="button" className="bg-[#4d6082] px-[9px] text-white">
          团队资源管理器
        </button>
      </div>
    </aside>
  );
}

/* ---------- process data page ---------- */

type Col = { name: string; w: string };
type GridProps = { label: string; cols: Col[]; rows: ReactNode[][]; rowClass?: (i: number) => string; wide?: boolean };

function Grid({ label, cols, rows, rowClass, wide }: GridProps) {
  const inset = wide ? 'first:pl-1.5' : 'first:pl-0.5';
  return (
    <table aria-label={label} className="w-max table-fixed border-collapse text-left">
      <colgroup>
        {cols.map((c, i) => (
          <col key={i} className={c.w} />
        ))}
      </colgroup>
      <thead>
        <tr className="h-[30px]">
          {cols.map((c, i) => (
            <th key={i} className={clsx('border-r border-[#e5e5e5] p-0 pl-1.5 font-normal whitespace-nowrap', inset)}>
              {c.name}
            </th>
          ))}
        </tr>
      </thead>
      <tbody>
        {rows.map((r, i) => (
          <tr key={i} className={clsx('h-7', rowClass?.(i))}>
            {cols.map((_, j) => (
              <td key={j} className={clsx('p-0 pl-1.5 whitespace-nowrap', inset)}>
                {r[j]}
              </td>
            ))}
          </tr>
        ))}
      </tbody>
    </table>
  );
}

const syncCols: Col[] = [
  { name: 'SM', w: 'w-[47px]' },
  { name: 'Size', w: 'w-[67px]' },
  { name: 'Type', w: 'w-[75px]' },
  { name: 'Flags', w: 'w-[67px]' },
];
const syncRows = [
  ['0', '253', 'Mbx...'],
  ['1', '253', 'MbxIn'],
  ['2', '19', 'Outp...'],
  ['3', '13', 'Inputs'],
];
const syncTone = ['', 'bg-[#e0ffff]', 'bg-[#efefef]', 'bg-[#e0ffff]'];

const pdoCols: Col[] = [
  { name: 'Index', w: 'w-[86px]' },
  { name: 'Size', w: 'w-[75px]' },
  { name: 'Name', w: 'w-[270px]' },
  { name: 'Flags', w: 'w-[120px]' },
  { name: 'SM', w: 'w-[75px]' },
  { name: 'SU', w: 'w-[75px]' },
];
const pdoRows = [
  ['0x1A00', '13.0', 'TxPDO 1', '', '3', '0'],
  ['0x1A01', '4.0', 'TxPDO 2', '', '', '0'],
  ['0x1A02', '5.0', 'TxPDO 3', '', '', '0'],
  ['0x1A03', '4.0', 'TxPDO 4', '', '', '0'],
  ['0x1600', '19.0', 'RxPDO 1', '', '2', '0'],
  ['0x1601', '4.0', 'RxPDO 2', '', '', '0'],
  ['0x1602', '10.0', 'RxPDO 3', '', '', '0'],
  ['0x1603', '5.0', 'RxPDO 4', '', '', '0'],
];
const pdoTone = ['bg-[#0078d7] text-white', 'bg-[#d3eeee]', 'bg-[#eeeeee]', 'bg-[#d3eeee]', '', 'bg-[#d3eeee]', 'bg-[#eeeeee]', 'bg-[#d3eeee]'];

const contentCols: Col[] = [
  { name: 'Index', w: 'w-[86px]' },
  { name: 'Size', w: 'w-[75px]' },
  { name: 'Offs', w: 'w-[75px]' },
  { name: 'Name', w: 'w-[270px]' },
  { name: 'Type', w: 'w-[120px]' },
  { name: 'Default (he...', w: 'w-[120px]' },
];
const contentRows = [
  ['0x603F:...', '2.0', '0.0', 'ErrorCode', 'UINT'],
  ['0x6041:...', '2.0', '2.0', 'Statusword', 'UINT'],
  ['0x6061:...', '1.0', '4.0', 'Modes of Operation Display', 'SINT'],
  ['0x6064:...', '4.0', '5.0', 'Position Actual Value', 'DINT'],
  ['0x606C:...', '4.0', '9.0', 'Velocity Actual Value', 'DINT'],
  ['', '', '13.0'],
];

const tabs = [
  { name: 'General', w: 'w-[77px]' },
  { name: 'EtherCAT', w: 'w-[93px]' },
  { name: 'DC', w: 'w-16' },
  { name: 'Process Data', w: 'w-[125px]' },
  { name: 'Plc', w: 'w-16' },
  { name: 'Startup', w: 'w-[76px]' },
  { name: 'CoE - Online', w: 'w-[120px]' },
  { name: 'Online', w: 'w-[67px]' },
];

function Check({ id, label, checked, className }: { id: string; label: string; checked?: boolean; className?: string }) {
  return (
    <label htmlFor={id} className={clsx('flex items-center', className)}>
      <span className="relative flex size-5 shrink-0">
        <input
          id={id}
          type="checkbox"
          defaultChecked={checked}
          className="peer size-5 appearance-none rounded-[4px] border border-[#767676] bg-[#f5f5f5] checked:border-[#005fb8] checked:bg-[#005fb8]"
        />
        <svg viewBox="0 0 20 20" className="pointer-events-none absolute inset-0 hidden peer-checked:block" fill="none">
          <path d="M5.500 10.500l3 3 6-7" stroke="#fff" strokeWidth="1.200" />
        </svg>
      </span>
      {label}
    </label>
  );
}

function ProcessData() {
  return (
    <div className="bg-[#f0f0f0] pb-[19px] pl-3 pr-[46px] pt-3">
      <div role="tablist" className="flex items-end pl-0.5">
        {tabs.map((t) => {
          const active = t.name === 'Process Data';
          return (
            <button
              key={t.name}
              type="button"
              role="tab"
              aria-selected={active}
              className={clsx(
                'border border-b-0 border-[#e5e5e5] pl-1.5 text-left whitespace-nowrap',
                t.w,
                active ? 'relative -mb-px h-8 bg-[#f9f9f9] pb-1' : 'h-[29px] border-l-0 bg-[#f3f3f3]',
              )}
            >
              {t.name}
            </button>
          );
        })}
      </div>
      <div className="grid grid-cols-[322px_minmax(0,1fr)] gap-x-[33px] border border-[#e5e5e5] bg-[#f9f9f9] px-[22px] pb-6 pt-5">
        <section>
          <h3 className="mb-2.5 leading-7">Sync Manager:</h3>
          <div className="h-[326px] border border-[#828790] bg-white pl-[5px] pt-px">
            <Grid label="Sync Manager" cols={syncCols} rows={syncRows} rowClass={(i) => syncTone[i]} />
          </div>
        </section>
        <section>
          <h3 className="mb-2.5 leading-7">PDO List:</h3>
          <div className="relative h-[326px] border border-[#828790] bg-white pl-[5px] pt-px">
            <Grid label="PDO List" cols={pdoCols} rows={pdoRows} rowClass={(i) => pdoTone[i]} />
            <span className="absolute -left-[9px] top-1 h-[66px] w-[367px] border-5 border-[#ed1c24]" />
          </div>
        </section>
        <section className="pt-[18px]">
          <h3 className="mb-2 leading-[26px]">PDO Assignment (0x1C12):</h3>
          <div className="h-[222px] border border-[#828790] bg-white pl-0.5 pt-px">
            <Check id="a1600" label="0x1600" checked className="h-6 gap-0.5" />
            <Check id="a1601" label="0x1601" className="h-6 gap-0.5" />
            <Check id="a1602" label="0x1602" className="h-6 gap-0.5" />
            <Check id="a1603" label="0x1603" className="h-6 gap-0.5" />
          </div>
        </section>
        <section className="pt-[18px]">
          <h3 className="mb-2 leading-[26px]">PDO Content (0x1A00):</h3>
          <div className="relative h-[222px] border border-[#828790] bg-white pl-[5px] pt-px">
            <Grid label="PDO Content" cols={contentCols} rows={contentRows} rowClass={(i) => (i % 2 ? 'bg-[#e0ffff]' : '')} />
            <span className="absolute -left-[17px] top-[17px] h-[188px] w-[729px] border-5 border-[#ed1c24]" />
          </div>
        </section>
        <fieldset className="mt-[17px] h-[127px] border border-[#dcdcdc] pl-[21px]">
          <legend className="-ml-4 px-1 leading-7">Download</legend>
          <Check id="dl-assign" label="PDO Assignment" checked className="mt-2 h-7 gap-1.5" />
          <Check id="dl-config" label="PDO Configuration" checked className="mt-[11px] h-7 gap-1.5" />
        </fieldset>
        <div className="mt-4 flex flex-col">
          <label className="relative flex h-[31px] items-center">
            <select aria-label="Predefined PDO Assignment" disabled className="h-full w-full appearance-none border border-[#ebebeb] bg-[#fafafa] px-[3px] text-[#838383] opacity-100">
              <option>Predefined PDO Assignment: (none)</option>
            </select>
            <Svg className="pointer-events-none absolute right-2 h-1.5 w-2.5" box="0 0 10 6">
              <path d="M0 0l5 5 5-5" stroke="#b0b0b0" strokeWidth="1.200" />
            </Svg>
          </label>
          <button type="button" className="mt-[18px] h-[34px] rounded-[4px] border border-[#d0d0d0] bg-[#fdfdfd] px-0.5 text-left">
            Load PDO info from device
          </button>
          <button type="button" className="mt-[11px] h-[34px] rounded-[4px] border border-[#d0d0d0] bg-[#fdfdfd] px-0.5 text-left">
            Sync Unit Assignment...
          </button>
        </div>
      </div>
    </div>
  );
}

/* ---------- variable list ---------- */

const varCols: Col[] = [
  { name: 'Name', w: 'w-[180px]' },
  { name: '', w: 'w-[30px]' },
  { name: 'Online', w: 'w-[180px]' },
  { name: 'Type', w: 'w-[120px]' },
  { name: 'Size', w: 'w-[75px]' },
  { name: '>Addr...', w: 'w-[87px]' },
  { name: 'In/Out', w: 'w-[75px]' },
  { name: 'User ID', w: 'w-[75px]' },
  { name: 'Linked to', w: 'w-[225px]' },
];
const vars = [
  ['ErrorCode', 'UINT', '2.0', '26.0'],
  ['Statusword', 'UINT', '2.0', '28.0'],
  ['Modes of Oper...', 'SINT', '1.0', '30.0'],
  ['Position Actual ...', 'DINT', '4.0', '31.0'],
  ['Velocity Actual ...', 'DINT', '4.0', '35.0'],
  ['WcState', 'BIT', '0.1', '1522.0'],
  ['InputToggle', 'BIT', '0.1', '1524.0'],
  ['State', 'UINT', '2.0', '1548.0'],
  ['AdsAddr', 'AMSADDR', '8.0', '1550.0'],
  ['Chn0', 'USINT', '1.0', '1558.0'],
  ['DcOutputShift', 'DINT', '4.0', '1559.0'],
];

function VariableList() {
  const rows = vars.map(([name, type, size, addr]) => [
    <span className="flex items-center gap-[7px]">
      <VarIcon />
      {name}
    </span>,
    '',
    '',
    type,
    size,
    addr,
    'Input',
    '0',
  ]);
  return (
    <div className="flex flex-1 border-t-2 border-[#696969] bg-white">
      <div className="flex-1">
        <Grid label="Variables" cols={varCols} rows={rows} wide />
      </div>
      <div className="flex w-[26px] justify-center bg-[#f0f0f0] pt-[26px]">
        <span className="h-[177px] w-1.5 rounded-full bg-[#868686]" />
      </div>
    </div>
  );
}

function Editor() {
  return (
    <section className="flex min-w-0 flex-1 flex-col pt-[9px]">
      <div className="flex items-center justify-between border-b-[3px] border-[#fff29d]">
        <div className="flex h-[30px] items-center gap-[18px] bg-[#fff29d] pl-1.5 pr-2 text-black">
          <span>TwinCAT Project2</span>
          <Pin className="size-3.5 rotate-90 text-[#75633d]" />
          <button type="button" aria-label="关闭">
            <Cross className="size-3.5 text-[#75633d]" />
          </button>
        </div>
        <button type="button" aria-label="窗口列表" className="pr-1 pt-1">
          <Caret className="h-[7px] w-3 text-[#d6dbe9]" />
        </button>
      </div>
      <div className="flex flex-1 flex-col border-[3px] border-t-2 border-[#8e9bbc] border-t-[#696969] text-black">
        <ProcessData />
        <div className="h-[3px] border-t border-white bg-[#f0f0f0]" />
        <VariableList />
      </div>
    </section>
  );
}

const Dock = ({ children }: { children: ReactNode }) => (
  <button type="button" className="border-r-8 border-[#465a7d] pr-[9px] leading-[18px] text-white [text-orientation:upright] [writing-mode:vertical-rl]">
    {children}
  </button>
);

export default function App() {
  return (
    <div className="flex min-h-screen flex-col bg-[#293955] font-['Noto_Sans','Noto_Sans_CJK_SC',sans-serif] text-[18px] leading-6">
      <Header />
      <main className="flex flex-1">
        <SolutionExplorer />
        <Editor />
        <div className="flex w-[45px] shrink-0 flex-col items-end gap-[18px] pt-[9px]">
          <Dock>属性</Dock>
          <Dock>工具箱</Dock>
        </div>
      </main>
      <div className="flex h-[47px] gap-[18px] pl-[9px] pt-2 text-white">
        <button type="button" className="border-b-9 border-[#465a7d] pb-1.5">错误列表</button>
        <button type="button" className="border-b-9 border-[#465a7d] pb-1.5">输出</button>
      </div>
      <footer className="flex h-[37px] items-center border-b border-[#444] bg-[#007acc] text-white">
        <div className="flex w-[76%] items-center gap-3 pl-1.5">
          <Svg className="h-[18px] w-6" box="0 0 24 18">
            <path d="M5 1h18l-4 16H1z" stroke="#fff" strokeWidth="1.600" />
          </Svg>
          <span className="flex-1">就绪</span>
          <ModeBox color="#2f3ff0" edge="#c8c8c8" />
        </div>
        <button type="button" className="ml-auto flex items-center gap-3 pr-[21px]">
          <Svg className="h-[18px] w-3.5" box="0 0 14 18">
            <path d="M7 18V2M1.500 8L7 2l5.500 6" stroke="#e0e0e0" strokeWidth="2.400" />
          </Svg>
          添加到源代码管理
          <Svg className="h-1.5 w-[11px]" box="0 0 11 6">
            <path d="M0 6h11L5.500 0z" fill="#fff" />
          </Svg>
        </button>
      </footer>
    </div>
  );
}
